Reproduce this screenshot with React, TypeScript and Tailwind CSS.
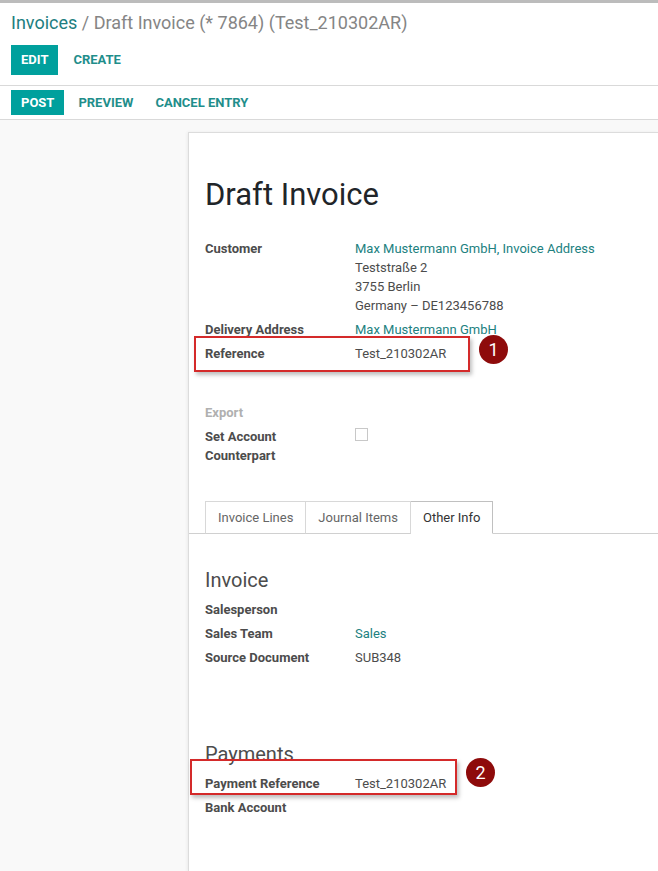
import React from "react";

const FONT = { fontFamily: "Roboto, 'Noto Sans', Arial, sans-serif" };

function Row({
  label,
  children,
  labelClass = "text-[#4c4c4c]",
}: {
  label: React.ReactNode;
  children?: React.ReactNode;
  labelClass?: string;
}) {
  return (
    <div className="flex text-[13px] leading-[19px]">
      <div className={`w-[150px] shrink-0 font-bold ${labelClass}`}>{label}</div>
      <div className="text-[#4c4c4c]">{children}</div>
    </div>
  );
}

function Marker({ n, className }: { n: number; className: string }) {
  return (
    <div
      className={`absolute flex h-[29px] w-[29px] items-center justify-center rounded-full bg-[#8e0b0b] text-[18px] leading-none text-white ${className}`}
    >
      {n}
    </div>
  );
}

export default function App() {
  return (
    <div style={FONT} className="min-h-[871px] w-[658px] overflow-hidden bg-[#f9f9f9]">
      <div className="bg-white">
        <div className="h-[3px] bg-[#bcbcbc]" />
        <div className="px-[11px] pt-[9px] text-[18px] leading-[22px]">
          <span className="text-[#217e80]">Invoices</span>
          <span className="text-[#858585]"> / Draft Invoice (* 7864) (Test_210302AR)</span>
        </div>
        <div className="flex items-center gap-[15px] px-[11px] pt-[11px] pb-[10px]">
          <div className="flex h-[30px] items-center bg-[#00a09d] px-[10px] text-[13px] font-bold text-white">
            EDIT
          </div>
          <div className="text-[13px] font-bold text-[#1f8e8b]">CREATE</div>
        </div>
        <div className="flex items-center gap-[14px] border-y border-[#d9d9d9] px-[11px] py-[4px]">
          <div className="flex h-[25px] items-center bg-[#00a09d] px-[10px] text-[13px] font-bold text-white">
            POST
          </div>
          <div className="text-[13px] font-bold text-[#1f8e8b]">PREVIEW</div>
          <div className="pl-[8px] text-[13px] font-bold text-[#1f8e8b]">CANCEL ENTRY</div>
        </div>
      </div>

      <div className="ml-[188px] mt-[12px] min-h-[740px] border-l border-t border-[#dcdcdc] bg-white shadow-[-1px_0_3px_rgba(0,0,0,0.06)]">
        <div className="pl-[16px]">
          <h1 className="pt-[44px] text-[31px] font-normal leading-[36px] text-[#212529]">
            Draft Invoice
          </h1>

          <div className="mt-[26px]">
            <Row label="Customer">
              <div className="text-[#21817f]">Max Mustermann GmbH, Invoice Address</div>
              <div>Teststraße 2</div>
              <div>3755 Berlin</div>
              <div>Germany – DE123456788</div>
            </Row>
            <div className="mt-[5px]">
              <Row label="Delivery Address">
                <span className="text-[#21817f]">Max Mustermann GmbH</span>
              </Row>
            </div>
            <div className="relative mt-[5px]">
              <Row label="Reference">Test_210302AR</Row>
              <div className="absolute left-[-11px] top-[-8px] h-[36px] w-[276px] border-2 border-[#d42a2a] shadow-[2px_3px_4px_rgba(0,0,0,0.25)]" />
              <Marker n={1} className="left-[274px] top-[-9px]" />
            </div>
          </div>

          <div className="mt-[40px]">
            <Row label="Export" labelClass="text-[#b0b0b0]" />
            <div className="mt-[5px] flex text-[13px] leading-[19px]">
              <div className="w-[150px] shrink-0 font-bold text-[#4c4c4c]">
                Set Account
                <br />
                Counterpart
              </div>
              <div className="mt-[1px] h-[13px] w-[13px] border border-[#c8c8c8] bg-white" />
            </div>
          </div>
        </div>

        <div className="mt-[36px] flex border-b border-[#d0d0d0] pl-[16px] text-[13px] leading-[31px]">
          <div className="mb-[-1px] border border-[#d8d8d8] border-b-[#d0d0d0] px-[12px] text-[#666]">
            Invoice Lines
          </div>
          <div className="mb-[-1px] border border-l-0 border-[#d8d8d8] border-b-[#d0d0d0] px-[12px] text-[#666]">
            Journal Items
          </div>
          <div className="mb-[-1px] border border-l-0 border-[#c0c0c0] border-b-white bg-white px-[12px] text-[#333]">
            Other Info
          </div>
        </div>

        <div className="pl-[16px]">
          <h2 className="pt-[34px] text-[20px] font-normal leading-[24px] text-[#4c4c4c]">Invoice</h2>
          <div className="mt-[8px] flex flex-col gap-[5px]">
            <Row label="Salesperson" />
            <Row label="Sales Team">
              <span className="text-[#21817f]">Sales</span>
            </Row>
            <Row label="Source Document">SUB348</Row>
          </div>

          <h2 className="pt-[75px] text-[20px] font-normal leading-[24px] text-[#4c4c4c]">Payments</h2>
          <div className="mt-[8px] flex flex-col gap-[5px]">
            <div className="relative">
              <Row label="Payment Reference">Test_210302AR</Row>
              <div className="absolute left-[-15px] top-[-15px] h-[36px] w-[267px] border-2 border-[#d42a2a] shadow-[2px_3px_4px_rgba(0,0,0,0.25)]" />
              <Marker n={2} className="left-[261px] top-[-16px]" />
            </div>
            <Row label="Bank Account" />
          </div>
        </div>
      </div>
    </div>
  );
}
